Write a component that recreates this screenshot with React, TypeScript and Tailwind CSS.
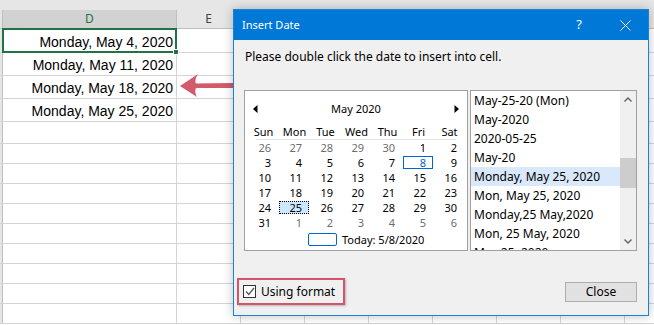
import React from "react";

const ROW_HEIGHTS = [24, 23, 23, 23, 22, 20, 20, 20, 20, 20, 20, 20, 20, 20];
const DATES = [
  "Monday, May 4, 2020",
  "Monday, May 11, 2020",
  "Monday, May 18, 2020",
  "Monday, May 25, 2020",
];
const OTHER_COLS = 8;

const DAY_NAMES = ["Sun", "Mon", "Tue", "Wed", "Thu", "Fri", "Sat"];

type Day = { n: number; other?: boolean; today?: boolean; selected?: boolean };

const WEEKS: Day[][] = [
  [26, 27, 28, 29, 30].map((n) => ({ n, other: true })).concat([{ n: 1 }, { n: 2 }]),
  [3, 4, 5, 6, 7, 8, 9].map((n) => ({ n, today: n === 8 })),
  [10, 11, 12, 13, 14, 15, 16].map((n) => ({ n })),
  [17, 18, 19, 20, 21, 22, 23].map((n) => ({ n })),
  [24, 25, 26, 27, 28, 29, 30].map((n) => ({ n, selected: n === 25 })),
  [{ n: 31 }].concat([1, 2, 3, 4, 5, 6].map((n) => ({ n, other: true }))),
];

const FORMATS = [
  "May-25-20 (Mon)",
  "May-2020",
  "2020-05-25",
  "May-20",
  "Monday, May 25, 2020",
  "Mon, May 25, 2020",
  "Monday,25 May,2020",
  "Mon, 25 May, 2020",
  "May 25, 2020",
];
const SELECTED_FORMAT = 4;

function Sheet() {
  return (
    <div className="relative">
      <div className="h-[10px] bg-[#e6e6e6]" />
      {/* Column headers */}
      <div className="flex h-[19px] border-b border-[#bfbfbf] bg-[#e6e6e6] text-[12px] font-['Noto_Sans',sans-serif]">
        <div className="w-[3px] shrink-0 border-r border-[#bfbfbf]" />
        <div className="flex w-[174px] shrink-0 items-center justify-center border-r border-[#bfbfbf] bg-[#d2d2d2] text-[#217346]">
          D
        </div>
        {Array.from({ length: OTHER_COLS }).map((_, i) => (
          <div
            key={i}
            className="flex w-[64px] shrink-0 items-center justify-center border-r border-[#d4d4d4] text-[#444]"
          >
            {i === 0 ? "E" : ""}
          </div>
        ))}
      </div>
      {/* Rows */}
      {ROW_HEIGHTS.map((h, r) => (
        <div key={r} className="flex border-b border-[#d4d4d4]" style={{ height: h }}>
          <div className="w-[3px] shrink-0 border-r border-[#bfbfbf] bg-[#e6e6e6]" />
          <div className="flex w-[174px] shrink-0 items-end justify-end whitespace-nowrap border-r border-[#d4d4d4] pb-[2px] pr-[3px] font-['Liberation_Sans',Arial,sans-serif] text-[14px] leading-[16px] text-black">
            {DATES[r] ?? ""}
          </div>
          {Array.from({ length: OTHER_COLS }).map((_, i) => (
            <div key={i} className="w-[64px] shrink-0 border-r border-[#d4d4d4]" />
          ))}
        </div>
      ))}
      {/* Active cell */}
      <div className="absolute left-[2px] top-[28px] h-[25px] w-[175px] border-2 border-[#217346]">
        <span className="absolute -bottom-[4px] -right-[4px] size-[6px] border border-white bg-[#217346]" />
      </div>
    </div>
  );
}

function Calendar() {
  return (
    <div className="h-[161px] w-[224px] shrink-0 border border-[#a0a0a0] bg-white pt-[8px] text-[11px] text-black">
      <div className="flex h-[20px] items-center justify-between px-[8px]">
        <svg width="5" height="8" viewBox="0 0 5 8">
          <path d="M4.5 0 L0 4 L4.5 8 Z" fill="#000" />
        </svg>
        <span>May 2020</span>
        <svg width="5" height="8" viewBox="0 0 5 8">
          <path d="M0.5 0 L5 4 L0.5 8 Z" fill="#000" />
        </svg>
      </div>
      <div className="mt-[5px] flex h-[15px] items-center pl-[3px]">
        {DAY_NAMES.map((d) => (
          <div key={d} className="w-[31px] text-center leading-[15px]">
            {d}
          </div>
        ))}
      </div>
      <div className="mx-[11px] h-px bg-[#e3e3e3]" />
      <div className="pl-[3px]">
        {WEEKS.map((week, w) => (
          <div key={w} className="flex h-[15px]">
            {week.map((d, i) => (
              <div key={i} className="flex w-[31px] items-center">
                <span
                  className={
                    "flex h-[13px] w-[30px] items-center justify-end border pr-[6px] leading-[13px] " +
                    (d.selected
                      ? "border-dotted border-black bg-[#cce8ff] text-black"
                      : d.today
                        ? "border-[#0066cc] text-[#0066cc]"
                        : d.other
                          ? "border-transparent text-[#6d6d6d]"
                          : "border-transparent text-black")
                  }
                >
                  {d.n}
                </span>
              </div>
            ))}
          </div>
        ))}
      </div>
      <div className="mt-[1px] flex h-[16px] items-center pl-[63px]">
        <span className="h-[13px] w-[29px] rounded-[2px] border border-[#0066cc]" />
        <span className="ml-[5px] leading-[13px]">Today: 5/8/2020</span>
      </div>
    </div>
  );
}

function FormatList() {
  return (
    <div className="ml-[2px] flex h-[161px] w-[167px] shrink-0 border border-[#a0a0a0] bg-white text-[12px] text-black">
      <div className="flex-1 overflow-hidden">
        {FORMATS.map((f, i) => (
          <div
            key={f}
            className={
              "h-[19px] whitespace-nowrap pl-[3px] leading-[19px] " +
              (i === SELECTED_FORMAT ? "bg-[#d9e8fb]" : "")
            }
          >
            {f}
          </div>
        ))}
      </div>
      <div className="flex w-[16px] flex-col bg-[#f0f0f0]">
        <div className="flex h-[17px] items-center justify-center">
          <svg width="8" height="5" viewBox="0 0 8 5">
            <path d="M0.5 4.5 L4 1 L7.5 4.5" fill="none" stroke="#606060" strokeWidth="1.4" />
          </svg>
        </div>
        <div className="mt-[50px] h-[30px] bg-[#cdcdcd]" />
        <div className="flex-1" />
        <div className="flex h-[17px] items-center justify-center">
          <svg width="8" height="5" viewBox="0 0 8 5">
            <path d="M0.5 0.5 L4 4 L7.5 0.5" fill="none" stroke="#606060" strokeWidth="1.4" />
          </svg>
        </div>
      </div>
    </div>
  );
}

function InsertDateDialog() {
  return (
    <div className="absolute left-[233px] top-[9px] flex h-[307px] w-[416px] flex-col border border-[#1883d7] bg-[#f0f0f0] font-['Noto_Sans',sans-serif] shadow-[0_0_10px_rgba(0,0,0,0.25)]">
      <div className="flex h-[30px] shrink-0 items-center bg-[#0078d7] pl-[8px] text-[11px] text-white">
        <span className="flex-1">Insert Date</span>
        <span className="mr-[38px] text-[13px]">?</span>
        <svg width="11" height="11" viewBox="0 0 11 11" className="mr-[17px]">
          <path d="M0.5 0.5 L10.5 10.5 M10.5 0.5 L0.5 10.5" stroke="#fff" strokeWidth="1" />
        </svg>
      </div>
      <div className="pl-[11px] pt-[9px] text-[12px] leading-[16px] text-black">
        Please double click the date to insert into cell.
      </div>
      <div className="ml-[10px] mt-[25px] flex">
        <Calendar />
        <FormatList />
      </div>
      <div className="mt-[27px] flex items-center justify-between">
        <div className="ml-[3px] flex h-[27px] w-[108px] items-center border-2 border-[#d1566a] pl-[4px] shadow-[1px_1px_2px_rgba(0,0,0,0.25)]">
          <span className="flex size-[13px] items-center justify-center border border-[#333] bg-white">
            <svg width="10" height="9" viewBox="0 0 10 9">
              <path d="M1 4.5 L3.8 7.5 L9 1" fill="none" stroke="#555" strokeWidth="1.3" />
            </svg>
          </span>
          <span className="ml-[5px] text-[12px] leading-[16px] text-black">Using format</span>
        </div>
        <div className="mr-[11px] flex h-[20px] w-[72px] items-center justify-center border border-[#adadad] bg-[#e1e1e1] text-[12px] text-black">
          Close
        </div>
      </div>
    </div>
  );
}

function Arrow() {
  return (
    <svg
      className="absolute left-0 top-0"
      width="240"
      height="110"
      viewBox="0 0 240 110"
    >
      <path
        d="M180 86 L198 74 Q194 80 196 83.5 L233 83 L233 88 L196 88 Q194 92 197 97 Z"
        fill="#d25a6a"
      />
    </svg>
  );
}

export default function App() {
  return (
    <div className="relative h-[325px] w-[654px] overflow-hidden bg-white">
      <Sheet />
      <Arrow />
      <InsertDateDialog />
    </div>
  );
}
